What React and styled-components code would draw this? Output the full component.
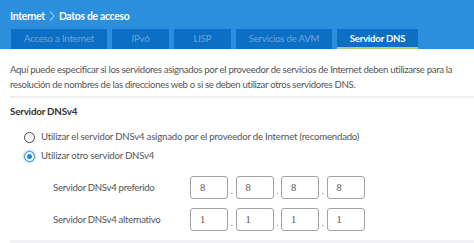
import styled, { createGlobalStyle } from "styled-components";

const GlobalStyle = createGlobalStyle`
  html, body {
    margin: 0;
    padding: 0;
    background: #ffffff;
  }
  body {
    font-family: Lato, "Open Sans", sans-serif;
    overflow: hidden;
  }
`;

const Page = styled.div`
  width: 474px;
  height: 243px;
  overflow: hidden;
  background: #ffffff;
`;

const Header = styled.div`
  background: #2b8fdd;
  padding: 9px 0 0 11px;
`;

const Crumbs = styled.div`
  display: flex;
  align-items: center;
  gap: 4px;
  color: #ffffff;
  font-size: 10.4px;
  font-weight: 700;
  line-height: 14px;
  letter-spacing: -0.3px;
  margin-left: -1px;
`;

const Chevron = styled.svg`
  width: 6px;
  height: 10px;
`;

const Tabs = styled.div`
  display: flex;
  gap: 5px;
  margin-top: 6px;
`;

const Tab = styled.div`
  width: ${(p) => p.w}px;
  height: 20px;
  box-sizing: border-box;
  background: #0c6fc3;
  color: ${(p) => (p.active ? "#ffffff" : "#6aa6dc")};
  font-size: 9.6px;
  letter-spacing: -0.2px;
  font-weight: ${(p) => (p.active ? 700 : 400)};
  display: flex;
  align-items: center;
  justify-content: center;
  border-bottom: 2px solid ${(p) => (p.active ? "#a7d46a" : "transparent")};
  padding-top: 1px;
`;

const Body = styled.div`
  padding: 13px 0 0 10px;
`;

const Intro = styled.p`
  margin: 0;
  font-size: 9.6px;
  line-height: 15px;
  color: #555555;
  letter-spacing: -0.32px;
`;

const Divider = styled.div`
  height: 2px;
  background: #efefef;
  margin-top: 4px;
`;

const SectionTitle = styled.div`
  margin-top: 6px;
  font-size: 9.8px;
  font-weight: 700;
  color: #333333;
  line-height: 14px;
  letter-spacing: -0.2px;
`;

const RadioList = styled.div`
  display: flex;
  flex-direction: column;
  gap: 5px;
  margin-top: 12px;
  padding-left: 14px;
`;

const RadioRow = styled.label`
  display: flex;
  align-items: center;
  gap: 6px;
  font-size: 9.6px;
  color: #555555;
  line-height: 14px;
  letter-spacing: -0.2px;
`;

const Radio = styled.span`
  flex: 0 0 11px;
  width: 11px;
  height: 11px;
  box-sizing: border-box;
  border-radius: 50%;
  border: 1.5px solid ${(p) => (p.checked ? "#1e86dc" : "#444444")};
  display: flex;
  align-items: center;
  justify-content: center;
  box-shadow: ${(p) => (p.checked ? "0 0 0 1.5px #d3e8fa" : "none")};

  &::after {
    content: "";
    width: 5px;
    height: 5px;
    border-radius: 50%;
    background: ${(p) => (p.checked ? "#1e86dc" : "transparent")};
  }
`;

const Fields = styled.div`
  display: flex;
  flex-direction: column;
  gap: 9px;
  margin-top: 13px;
  padding-left: 43px;
`;

const FieldRow = styled.div`
  display: flex;
  align-items: center;
`;

const FieldLabel = styled.div`
  flex: 0 0 137px;
  font-size: 9.6px;
  color: #555555;
  letter-spacing: -0.3px;
`;

const Ip = styled.div`
  display: flex;
  align-items: flex-end;
`;

const Octet = styled.div`
  width: 38px;
  height: 23px;
  box-sizing: border-box;
  border: 1px solid #a3a3a3;
  border-radius: 3px;
  font-family: "Liberation Serif", serif;
  font-size: 10.5px;
  color: #555555;
  display: flex;
  align-items: center;
  padding-left: 9px;
`;

const Dot = styled.span`
  width: 7.5px;
  text-align: center;
  font-size: 9px;
  color: #777777;
  line-height: 10px;
  padding-bottom: 3px;
`;

const Footer = styled.div`
  height: 8px;
  background: #f2f2f4;
  margin-top: 9px;
`;

const tabs = [
  { label: "Acceso a Internet", w: 96 },
  { label: "IPv6", w: 57 },
  { label: "LISP", w: 57 },
  { label: "Servicios de AVM", w: 96 },
  { label: "Servidor DNS", w: 81, active: true },
];

const servers = [
  { label: "Servidor DNSv4 preferido", ip: ["8", "8", "8", "8"] },
  { label: "Servidor DNSv4 alternativo", ip: ["1", "1", "1", "1"] },
];

const App = () => {
  return (
    <Page>
      <GlobalStyle />
      <Header>
        <Crumbs>
          <span>Internet</span>
          <Chevron viewBox="0 0 6 10">
            <polyline
              points="1,0.5 5,5 1,9.5"
              fill="none"
              stroke="#d8eafa"
              strokeWidth="0.9"
            />
          </Chevron>
          <span>Datos de acceso</span>
        </Crumbs>
        <Tabs>
          {tabs.map((t) => (
            <Tab key={t.label} w={t.w} active={t.active}>
              {t.label}
            </Tab>
          ))}
        </Tabs>
      </Header>
      <Body>
        <Intro>
          Aquí puede especificar si los servidores asignados por el proveedor de
          servicios de Internet deben utilizarse para la resolución de nombres
          de las direcciones web o si se deben utilizar otros servidores DNS.
        </Intro>
        <Divider />
        <SectionTitle>Servidor DNSv4</SectionTitle>
        <RadioList>
          <RadioRow>
            <Radio />
            Utilizar el servidor DNSv4 asignado por el proveedor de Internet
            (recomendado)
          </RadioRow>
          <RadioRow>
            <Radio checked />
            Utilizar otro servidor DNSv4
          </RadioRow>
        </RadioList>
        <Fields>
          {servers.map((s) => (
            <FieldRow key={s.label}>
              <FieldLabel>{s.label}</FieldLabel>
              <Ip>
                {s.ip.map((o, i) => (
                  <Ip key={i}>
                    {i > 0 && <Dot>.</Dot>}
                    <Octet>{o}</Octet>
                  </Ip>
                ))}
              </Ip>
            </FieldRow>
          ))}
        </Fields>
        <Footer />
      </Body>
    </Page>
  );
};

export default App;
